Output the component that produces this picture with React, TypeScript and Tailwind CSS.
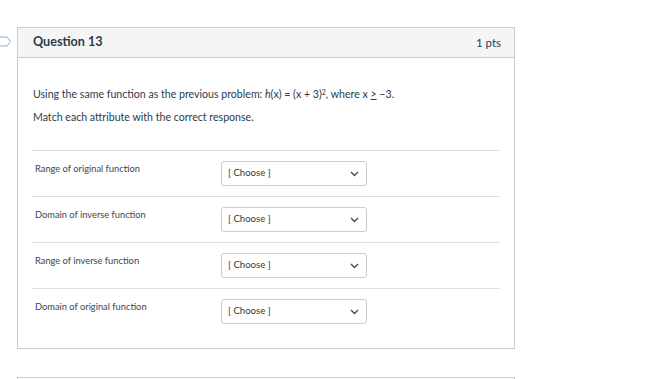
import React from "react";

const rows = [
  "Range of original function",
  "Domain of inverse function",
  "Range of inverse function",
  "Domain of original function",
];

function Chevron() {
  return (
    <svg width="9" height="6" viewBox="0 0 9 6" className="shrink-0">
      <path d="M1 1 L4.5 4.5 L8 1" fill="none" stroke="#3d4b55" strokeWidth="1.4" />
    </svg>
  );
}

export default function App() {
  return (
    <div
      className="relative w-[667px] h-[379px] bg-white overflow-hidden text-[#2d3b45]"
      style={{ fontFamily: "Lato, 'Open Sans', sans-serif" }}
    >
      <svg className="absolute left-0 top-[36px]" width="12" height="11" viewBox="0 0 12 11">
        <path d="M-2 1 H7 L10.5 5.5 L7 10 H-2" fill="none" stroke="#8fa8c0" strokeWidth="1" />
      </svg>
      <div className="ml-[17px] mt-[27px] w-[498px] border border-[#c7cdd1]">
        <div className="h-[30px] bg-[#f5f5f5] border-b border-[#c7cdd1] flex items-center justify-between pl-[15px] pr-[13px]">
          <span className="text-[12.6px] font-bold text-[#2d3b45]">Question 13</span>
          <span className="text-[11.5px] text-[#2d3b45]">1 pts</span>
        </div>
        <div className="px-[14px] pt-[28px] pb-[24px]">
          <p className="text-[10.6px] leading-[16px] pl-[1px]">
            Using the same function as the previous problem: <i>h</i>(x) = (x + 3)
            <sup className="text-[7px]">2</sup>, where x <span className="underline">&gt;</span> −3.
          </p>
          <p className="text-[10.6px] leading-[16px] mt-[7px] pl-[1px]">
            Match each attribute with the correct response.
          </p>
          <div className="mt-[25px]">
            {rows.map((r, i) => (
              <div
                key={r}
                className={`flex border-t border-[#dddfe1] pt-[10px] ${i < rows.length - 1 ? "pb-[10px]" : ""}`}
              >
                <div className="w-[189px] pl-[3px] pt-[2px] text-[9.3px] leading-[12px] text-[#3a4650]">{r}</div>
                <div className="w-[146px] h-[25px] border border-[#c7cdd1] rounded-[3px] bg-white flex items-center justify-between pl-[6px] pr-[7px]">
                  <span className="text-[9.6px] text-[#2d3b45]">[ Choose ]</span>
                  <Chevron />
                </div>
              </div>
            ))}
          </div>
        </div>
      </div>
      <div className="ml-[17px] mt-[28px] w-[498px] h-[20px] border border-[#c7cdd1]" />
    </div>
  );
}
